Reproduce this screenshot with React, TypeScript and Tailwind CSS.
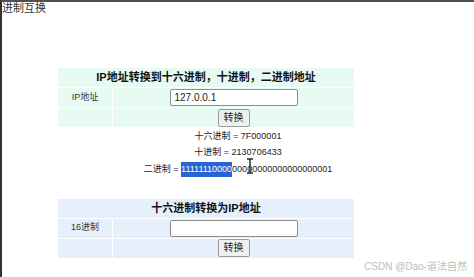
import React from 'react';

const font = { fontFamily: '"Liberation Sans", "Noto Sans CJK SC", sans-serif' };

type Props = {
  title: string;
  label: string;
  value: string;
  bg: string;
};

const ConvertTable: React.FC<Props> = ({ title, label, value, bg }) => (
  <div className={`ml-[56px] grid w-[296px] grid-cols-[54px_241px] gap-[1px] bg-white`}>
    <div className={`${bg} col-span-2 flex h-[19px] items-center justify-center text-[11px] font-bold text-[#111]`}>
      {title}
    </div>
    <div className={`${bg} flex h-[19px] items-center justify-center text-[9px] text-[#333]`}>{label}</div>
    <div className={`${bg} flex h-[19px] items-center justify-center`}>
      <input
        readOnly
        value={value}
        className="h-[17px] w-[128px] rounded-[2px] border border-[#8d8d8d] bg-white px-[4px] text-[10px] text-[#222] outline-none"
        style={font}
      />
    </div>
    <div className={`${bg} h-[19px]`} />
    <div className={`${bg} flex h-[19px] items-center justify-center`}>
      <button
        className="h-[18px] w-[32px] rounded-[2px] border border-[#9a9a9a] bg-[#efefef] text-[10px] leading-none text-[#222]"
        style={font}
      >
        转换
      </button>
    </div>
  </div>
);

export default function App() {
  return (
    <div
      className="relative h-[277px] w-[474px] overflow-hidden border-t-2 border-l-2 border-t-[#505050] border-l-[#333] bg-white"
      style={font}
    >
      <div className="text-[11px] leading-[13px] text-[#333]">进制互换</div>

      <div className="mt-[53px]">
        <ConvertTable
          title="IP地址转换到十六进制，十进制，二进制地址"
          label="IP地址"
          value="127.0.0.1"
          bg="bg-[#e8fbf3]"
        />
      </div>

      <div className="mt-[1px] flex flex-col items-center text-[9px] text-[#222]">
        <div className="flex h-[16.5px] items-center">十六进制 = 7F000001</div>
        <div className="flex h-[16.5px] items-center">十进制 = 2130706433</div>
        <div className="flex h-[16.5px] items-center">
          二进制 =&nbsp;
          <span className="bg-[#2a64d4] py-[1px] text-white">11111110000</span>
          <span>00000000000000000001</span>
        </div>
      </div>

      <div className="mt-[21px]">
        <ConvertTable title="十六进制转换为IP地址" label="16进制" value="" bg="bg-[#e6f0fc]" />
      </div>

      {/* text cursor over the binary line */}
      <svg className="absolute left-[244px] top-[156px]" width="8" height="16" viewBox="0 0 8 16">
        <path d="M1 1h6M4 1v14M1 15h6" stroke="#222" strokeWidth="1.4" fill="none" />
      </svg>

      <div className="absolute bottom-[3px] right-[7px] text-[10px] text-[#bdbdbd]">CSDN @Dao-道法自然</div>
    </div>
  );
}
